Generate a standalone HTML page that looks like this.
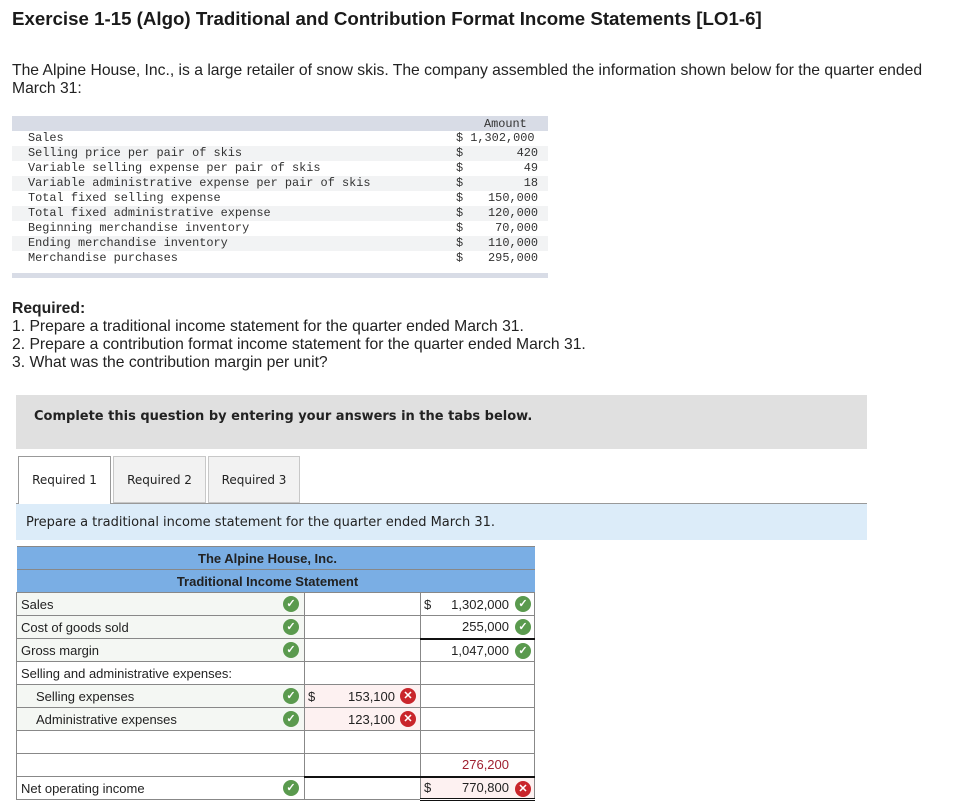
<!DOCTYPE html>
<html><head><meta charset="utf-8"><style>
*{box-sizing:border-box;margin:0;padding:0}
body{width:963px;height:807px;background:#fff;position:relative;font-family:"Liberation Sans",sans-serif;color:#222;overflow:hidden}
.a{position:absolute}
.mono{font-family:"Liberation Mono",monospace;font-size:11.9px;color:#333}
.dr{position:absolute;left:12px;width:536px;height:15px;line-height:15px}
.dr span{position:absolute}
.tab{position:absolute;top:456px;height:47px;border:1px solid #c8c8c8;font-size:13px;line-height:46px;text-align:center;background:#f2f2f2;color:#222}
table{position:absolute;left:16px;top:546px;border-collapse:collapse;font-size:13px;color:#222}
td{border:1px solid #888;height:23px;padding:0 4px;position:relative}
.h td{background:#7aaee4;text-align:center;font-weight:bold;border-left:none;border-right:none}
.l{width:288px;background:#f4f7f3}
.c2{width:116px}
.c3{width:114px;text-align:right;padding-right:25px}
.c2.r{text-align:right;padding-right:25px}
.pink{background:#fdf1f1}
.ok,.bad{position:absolute;width:16px;height:16px;border-radius:50%;top:3px;color:#fff;font-size:11px;line-height:16px;text-align:center;font-weight:bold}
.ok{background:#5a9a4e}
.bad{background:#c9252b}
.d{position:absolute;left:3px}
</style></head><body>
<div class="a" style="left:12px;top:8px;font-size:18.7px;font-weight:bold;color:#1a1a1a">Exercise 1-15 (Algo) Traditional and Contribution Format Income Statements [LO1-6]</div>
<div class="a" style="left:12px;top:62px;font-size:15.7px;line-height:18px;width:940px">The Alpine House, Inc., is a large retailer of snow skis. The company assembled the information shown below for the quarter ended March 31:</div>

<div class="a" style="left:12px;top:116px;width:536px;height:15px;background:#d8dce6"></div>
<div class="a mono" style="left:484px;top:117px">Amount</div>
<div class="dr mono" style="top:131px"><span style="left:16px">Sales</span><span style="left:444px">$ 1,302,000</span></div>
<div class="dr mono" style="top:146px;background:#f2f3f4"><span style="left:16px">Selling price per pair of skis</span><span style="left:444px">$</span><span style="right:10px">420</span></div>
<div class="dr mono" style="top:161px"><span style="left:16px">Variable selling expense per pair of skis</span><span style="left:444px">$</span><span style="right:10px">49</span></div>
<div class="dr mono" style="top:176px;background:#f2f3f4"><span style="left:16px">Variable administrative expense per pair of skis</span><span style="left:444px">$</span><span style="right:10px">18</span></div>
<div class="dr mono" style="top:191px"><span style="left:16px">Total fixed selling expense</span><span style="left:444px">$</span><span style="right:10px">150,000</span></div>
<div class="dr mono" style="top:206px;background:#f2f3f4"><span style="left:16px">Total fixed administrative expense</span><span style="left:444px">$</span><span style="right:10px">120,000</span></div>
<div class="dr mono" style="top:221px"><span style="left:16px">Beginning merchandise inventory</span><span style="left:444px">$</span><span style="right:10px">70,000</span></div>
<div class="dr mono" style="top:236px;background:#f2f3f4"><span style="left:16px">Ending merchandise inventory</span><span style="left:444px">$</span><span style="right:10px">110,000</span></div>
<div class="dr mono" style="top:251px"><span style="left:16px">Merchandise purchases</span><span style="left:444px">$</span><span style="right:10px">295,000</span></div>
<div class="a" style="left:12px;top:273px;width:536px;height:5px;background:#d8dce6"></div>

<div class="a" style="left:12px;top:300px;font-size:15.7px;line-height:18px"><b>Required:</b><br>1. Prepare a traditional income statement for the quarter ended March 31.<br>2. Prepare a contribution format income statement for the quarter ended March 31.<br>3. What was the contribution margin per unit?</div>

<div class="a" style="left:16px;top:395px;width:851px;height:54px;background:#e0e0e0;font-family:'DejaVu Sans',sans-serif;font-weight:bold;font-size:13px;line-height:44px;padding-left:18px">Complete this question by entering your answers in the tabs below.</div>

<div class="a" style="left:16px;top:503px;width:851px;height:37px;background:#dcecf9;border-top:1px solid #999;font-family:'DejaVu Sans',sans-serif;font-size:13px;line-height:37px;padding-left:10px">Prepare a traditional income statement for the quarter ended March 31.</div>
<div class="tab" style="left:18px;width:93px;background:#fff;border-color:#999;border-bottom:none;height:48px;font-family:'DejaVu Sans',sans-serif;font-size:12px">Required 1</div>
<div class="tab" style="left:113px;width:93px;font-family:'DejaVu Sans',sans-serif;font-size:12px">Required 2</div>
<div class="tab" style="left:208px;width:92px;font-family:'DejaVu Sans',sans-serif;font-size:12px">Required 3</div>

<table>
<tr class="h"><td colspan="3" style="padding-right:20px">The Alpine House, Inc.</td></tr>
<tr class="h"><td colspan="3" style="padding-right:20px">Traditional Income Statement</td></tr>
<tr><td class="l">Sales<span class="ok" style="right:5px">✓</span></td><td class="c2"></td><td class="c3"><span class="d">$</span>1,302,000<span class="ok" style="right:3px">✓</span></td></tr>
<tr><td class="l">Cost of goods sold<span class="ok" style="right:5px">✓</span></td><td class="c2"></td><td class="c3">255,000<span class="ok" style="right:3px">✓</span></td></tr>
<tr><td class="l">Gross margin<span class="ok" style="right:5px">✓</span></td><td class="c2"></td><td class="c3" style="border-top:2px solid #111">1,047,000<span class="ok" style="right:3px">✓</span></td></tr>
<tr><td class="l" style="background:#fff">Selling and administrative expenses:</td><td class="c2"></td><td class="c3"></td></tr>
<tr><td class="l" style="padding-left:19px">Selling expenses<span class="ok" style="right:5px">✓</span></td><td class="c2 r pink"><span class="d">$</span>153,100<span class="bad" style="right:4px">✕</span></td><td class="c3"></td></tr>
<tr><td class="l" style="padding-left:19px">Administrative expenses<span class="ok" style="right:5px">✓</span></td><td class="c2 r pink">123,100<span class="bad" style="right:4px">✕</span></td><td class="c3"></td></tr>
<tr><td class="l" style="background:#fff"></td><td class="c2"></td><td class="c3"></td></tr>
<tr><td class="l" style="background:#fff"></td><td class="c2"></td><td class="c3" style="color:#a02030">276,200</td></tr>
<tr><td class="l" style="background:#fff">Net operating income<span class="ok" style="right:5px">✓</span></td><td class="c2" style="border-top:2px solid #111"></td><td class="c3 pink" style="border-top:2px solid #111;border-bottom:3px double #111"><span class="d">$</span>770,800<span class="bad" style="right:3px">✕</span></td></tr>
</table>
</body></html>
